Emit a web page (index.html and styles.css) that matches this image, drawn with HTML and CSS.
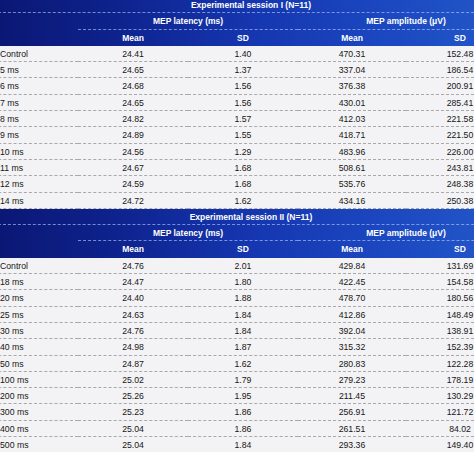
FILE: index.html
```html
<!DOCTYPE html>
<html>
<head>
<meta charset="utf-8">
<link rel="stylesheet" href="styles.css">
</head>
<body>
<div class="frame">
<div class="sheet">
  <section class="session">
    <div class="band">
      <div class="band-title">Experimental session I (N=11)</div>
      <div class="band-groups">
        <div></div>
        <div class="group">MEP latency (ms)</div>
        <div class="group">MEP amplitude (μV)</div>
      </div>
      <div class="cols">
        <div></div><div>Mean</div><div>SD</div><div>Mean</div><div>SD</div>
      </div>
    </div>
    <div class="row"><div class="lbl">Control</div><div>24.41</div><div>1.40</div><div>470.31</div><div>152.48</div></div>
    <div class="row"><div class="lbl">5 ms</div><div>24.65</div><div>1.37</div><div>337.04</div><div>186.54</div></div>
    <div class="row"><div class="lbl">6 ms</div><div>24.68</div><div>1.56</div><div>376.38</div><div>200.91</div></div>
    <div class="row"><div class="lbl">7 ms</div><div>24.65</div><div>1.56</div><div>430.01</div><div>285.41</div></div>
    <div class="row"><div class="lbl">8 ms</div><div>24.82</div><div>1.57</div><div>412.03</div><div>221.58</div></div>
    <div class="row"><div class="lbl">9 ms</div><div>24.89</div><div>1.55</div><div>418.71</div><div>221.50</div></div>
    <div class="row"><div class="lbl">10 ms</div><div>24.56</div><div>1.29</div><div>483.96</div><div>226.00</div></div>
    <div class="row"><div class="lbl">11 ms</div><div>24.67</div><div>1.68</div><div>508.61</div><div>243.81</div></div>
    <div class="row"><div class="lbl">12 ms</div><div>24.59</div><div>1.68</div><div>535.76</div><div>248.38</div></div>
    <div class="row"><div class="lbl">14 ms</div><div>24.72</div><div>1.62</div><div>434.16</div><div>250.38</div></div>
  </section>
  <section class="session">
    <div class="band">
      <div class="band-title">Experimental session II (N=11)</div>
      <div class="band-groups">
        <div></div>
        <div class="group">MEP latency (ms)</div>
        <div class="group">MEP amplitude (μV)</div>
      </div>
      <div class="cols">
        <div></div><div>Mean</div><div>SD</div><div>Mean</div><div>SD</div>
      </div>
    </div>
    <div class="row"><div class="lbl">Control</div><div>24.76</div><div>2.01</div><div>429.84</div><div>131.69</div></div>
    <div class="row"><div class="lbl">18 ms</div><div>24.47</div><div>1.80</div><div>422.45</div><div>154.58</div></div>
    <div class="row"><div class="lbl">20 ms</div><div>24.40</div><div>1.88</div><div>478.70</div><div>180.56</div></div>
    <div class="row"><div class="lbl">25 ms</div><div>24.63</div><div>1.84</div><div>412.86</div><div>148.49</div></div>
    <div class="row"><div class="lbl">30 ms</div><div>24.76</div><div>1.84</div><div>392.04</div><div>138.91</div></div>
    <div class="row"><div class="lbl">40 ms</div><div>24.98</div><div>1.87</div><div>315.32</div><div>152.39</div></div>
    <div class="row"><div class="lbl">50 ms</div><div>24.87</div><div>1.62</div><div>280.83</div><div>122.28</div></div>
    <div class="row"><div class="lbl">100 ms</div><div>25.02</div><div>1.79</div><div>279.23</div><div>178.19</div></div>
    <div class="row"><div class="lbl">200 ms</div><div>25.26</div><div>1.95</div><div>211.45</div><div>130.29</div></div>
    <div class="row"><div class="lbl">300 ms</div><div>25.23</div><div>1.86</div><div>256.91</div><div>121.72</div></div>
    <div class="row"><div class="lbl">400 ms</div><div>25.04</div><div>1.86</div><div>261.51</div><div>84.02</div></div>
    <div class="row"><div class="lbl">500 ms</div><div>25.04</div><div>1.84</div><div>293.36</div><div>149.40</div></div>
  </section>
</div>
</div>
</body>
</html>
```

FILE: styles.css
```css
html, body {
  margin: 0;
  padding: 0;
  width: 474px;
  height: 452px;
  overflow: hidden;
  background: #f3f3f5;
}
body {
  font-family: "Liberation Sans", Arial, sans-serif;
  font-size: 8.7px;
  color: #161616;
}
.frame {
  width: 474px;
  height: 452px;
  overflow: hidden;
}
.sheet {
  width: 526px;
  margin: -3px 0 0 -12px;
}
.band {
  background: linear-gradient(to right, #0a1672 0%, #0e238e 25%, #1536b0 50%, #1b47c0 75%, #2459c9 100%);
  color: #ffffff;
  font-weight: bold;
  font-size: 8.5px;
}
.band-title,
.band-groups > div,
.cols > div,
.row > div {
  height: 16.3px;
  line-height: 16.3px;
  box-sizing: border-box;
  text-align: center;
  white-space: nowrap;
}
.band-title {
  border-bottom: 1px dashed rgba(190, 210, 255, 0.6);
}
.band-groups {
  display: grid;
  grid-template-columns: 90px 220px 216px;
}
.band-groups > .group {
  border-bottom: 1px dashed rgba(190, 210, 255, 0.6);
}
.cols,
.row {
  display: grid;
  grid-template-columns: 90px 110px 110px 108px 108px;
}
.row {
  background: #f3f3f5;
}
.row > div {
  border-bottom: 1px dashed #a9a9ad;
}
.row > .lbl {
  text-align: left;
  padding-left: 12px;
}
```
